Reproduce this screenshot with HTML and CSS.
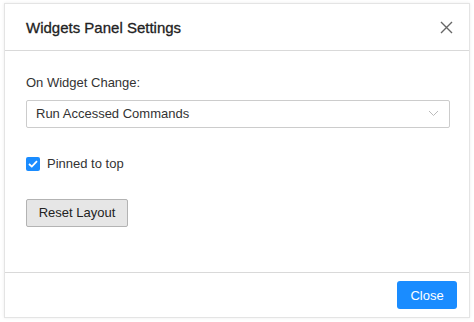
FILE: index.html
```html
<!DOCTYPE html>
<html lang="en">

<head>
    <meta charset="UTF-8">
    <title>Widgets Panel Settings</title>
    <link rel="stylesheet" href="styles.css">
</head>

<body>
    <div class="dialog">
        <header class="dialog-header">
            <h1>Widgets Panel Settings</h1>
            <button class="close-x" aria-label="Close">
                <svg width="13" height="13" viewBox="0 0 13 13">
                    <path d="M1 1 L12 12 M12 1 L1 12" stroke="#666" stroke-width="1.4" fill="none"/>
                </svg>
            </button>
        </header>

        <section class="dialog-body">
            <label class="field-label">On Widget Change:</label>
            <div class="select">
                <span>Run Accessed Commands</span>
                <svg width="11" height="7" viewBox="0 0 11 7">
                    <path d="M1 1 L5.5 5.5 L10 1" stroke="#bbb" stroke-width="1" fill="none"/>
                </svg>
            </div>

            <label class="check-row">
                <span class="checkbox">
                    <svg width="10" height="8" viewBox="0 0 10 8">
                        <path d="M1 4 L3.8 6.6 L9 1.2" stroke="#fff" stroke-width="1.8" fill="none"/>
                    </svg>
                </span>
                Pinned to top
            </label>

            <button class="btn-reset">Reset Layout</button>
        </section>

        <footer class="dialog-footer">
            <button class="btn-close">Close</button>
        </footer>
    </div>
</body>

</html>
```

FILE: styles.css
```css
* {
    box-sizing: border-box;
    margin: 0;
    padding: 0;
}

body {
    font-family: 'Liberation Sans', Arial, sans-serif;
    color: #222;
    background-color: #fff;
    padding: 3px 4px;
}

.dialog {
    width: 466px;
    height: 315px;
    border: 1px solid #e4e4e4;
    box-shadow: 0 0 3px rgba(0, 0, 0, 0.08);
    display: flex;
    flex-direction: column;
}

.dialog-header {
    height: 47px;
    display: flex;
    justify-content: space-between;
    align-items: center;
    padding: 0 16px 0 21px;
    border-bottom: 1px solid #d9d9d9;
}

.dialog-header h1 {
    font-size: 15px;
    font-weight: normal;
    color: #222;
    -webkit-text-stroke: 0.3px #222;
}

.close-x {
    background: none;
    border: none;
    display: flex;
    cursor: pointer;
}

.dialog-body {
    flex: 1;
    padding: 24px 19px 0 21px;
    display: flex;
    flex-direction: column;
    align-items: flex-start;
}

.field-label {
    font-size: 13px;
    color: #333;
    line-height: 16px;
}

.select {
    margin-top: 9px;
    width: 424px;
    height: 28px;
    border: 1px solid #ccc;
    border-radius: 2px;
    display: flex;
    justify-content: space-between;
    align-items: center;
    padding: 0 10px 1px 9px;
    font-size: 13px;
    color: #333;
}

.check-row {
    margin-top: 28px;
    display: flex;
    align-items: center;
    gap: 7px;
    font-size: 13px;
    color: #333;
}

.checkbox {
    width: 14px;
    height: 14px;
    border-radius: 2px;
    background-color: #1a8cff;
    display: flex;
    align-items: center;
    justify-content: center;
}

.btn-reset {
    margin-top: 28px;
    width: 102px;
    height: 28px;
    padding-bottom: 1px;
    font-family: inherit;
    font-size: 13px;
    color: #222;
    background-color: #e6e6e6;
    border: 1px solid #b3b3b3;
    border-radius: 2px;
    cursor: pointer;
}

.dialog-footer {
    height: 45px;
    border-top: 1px solid #d9d9d9;
    display: flex;
    justify-content: flex-end;
    align-items: center;
    padding: 0 12px 0 0;
}

.btn-close {
    width: 60px;
    height: 28px;
    font-family: inherit;
    font-size: 13px;
    color: #fff;
    background-color: #1a8cff;
    border: none;
    border-radius: 3px;
    cursor: pointer;
}
```
